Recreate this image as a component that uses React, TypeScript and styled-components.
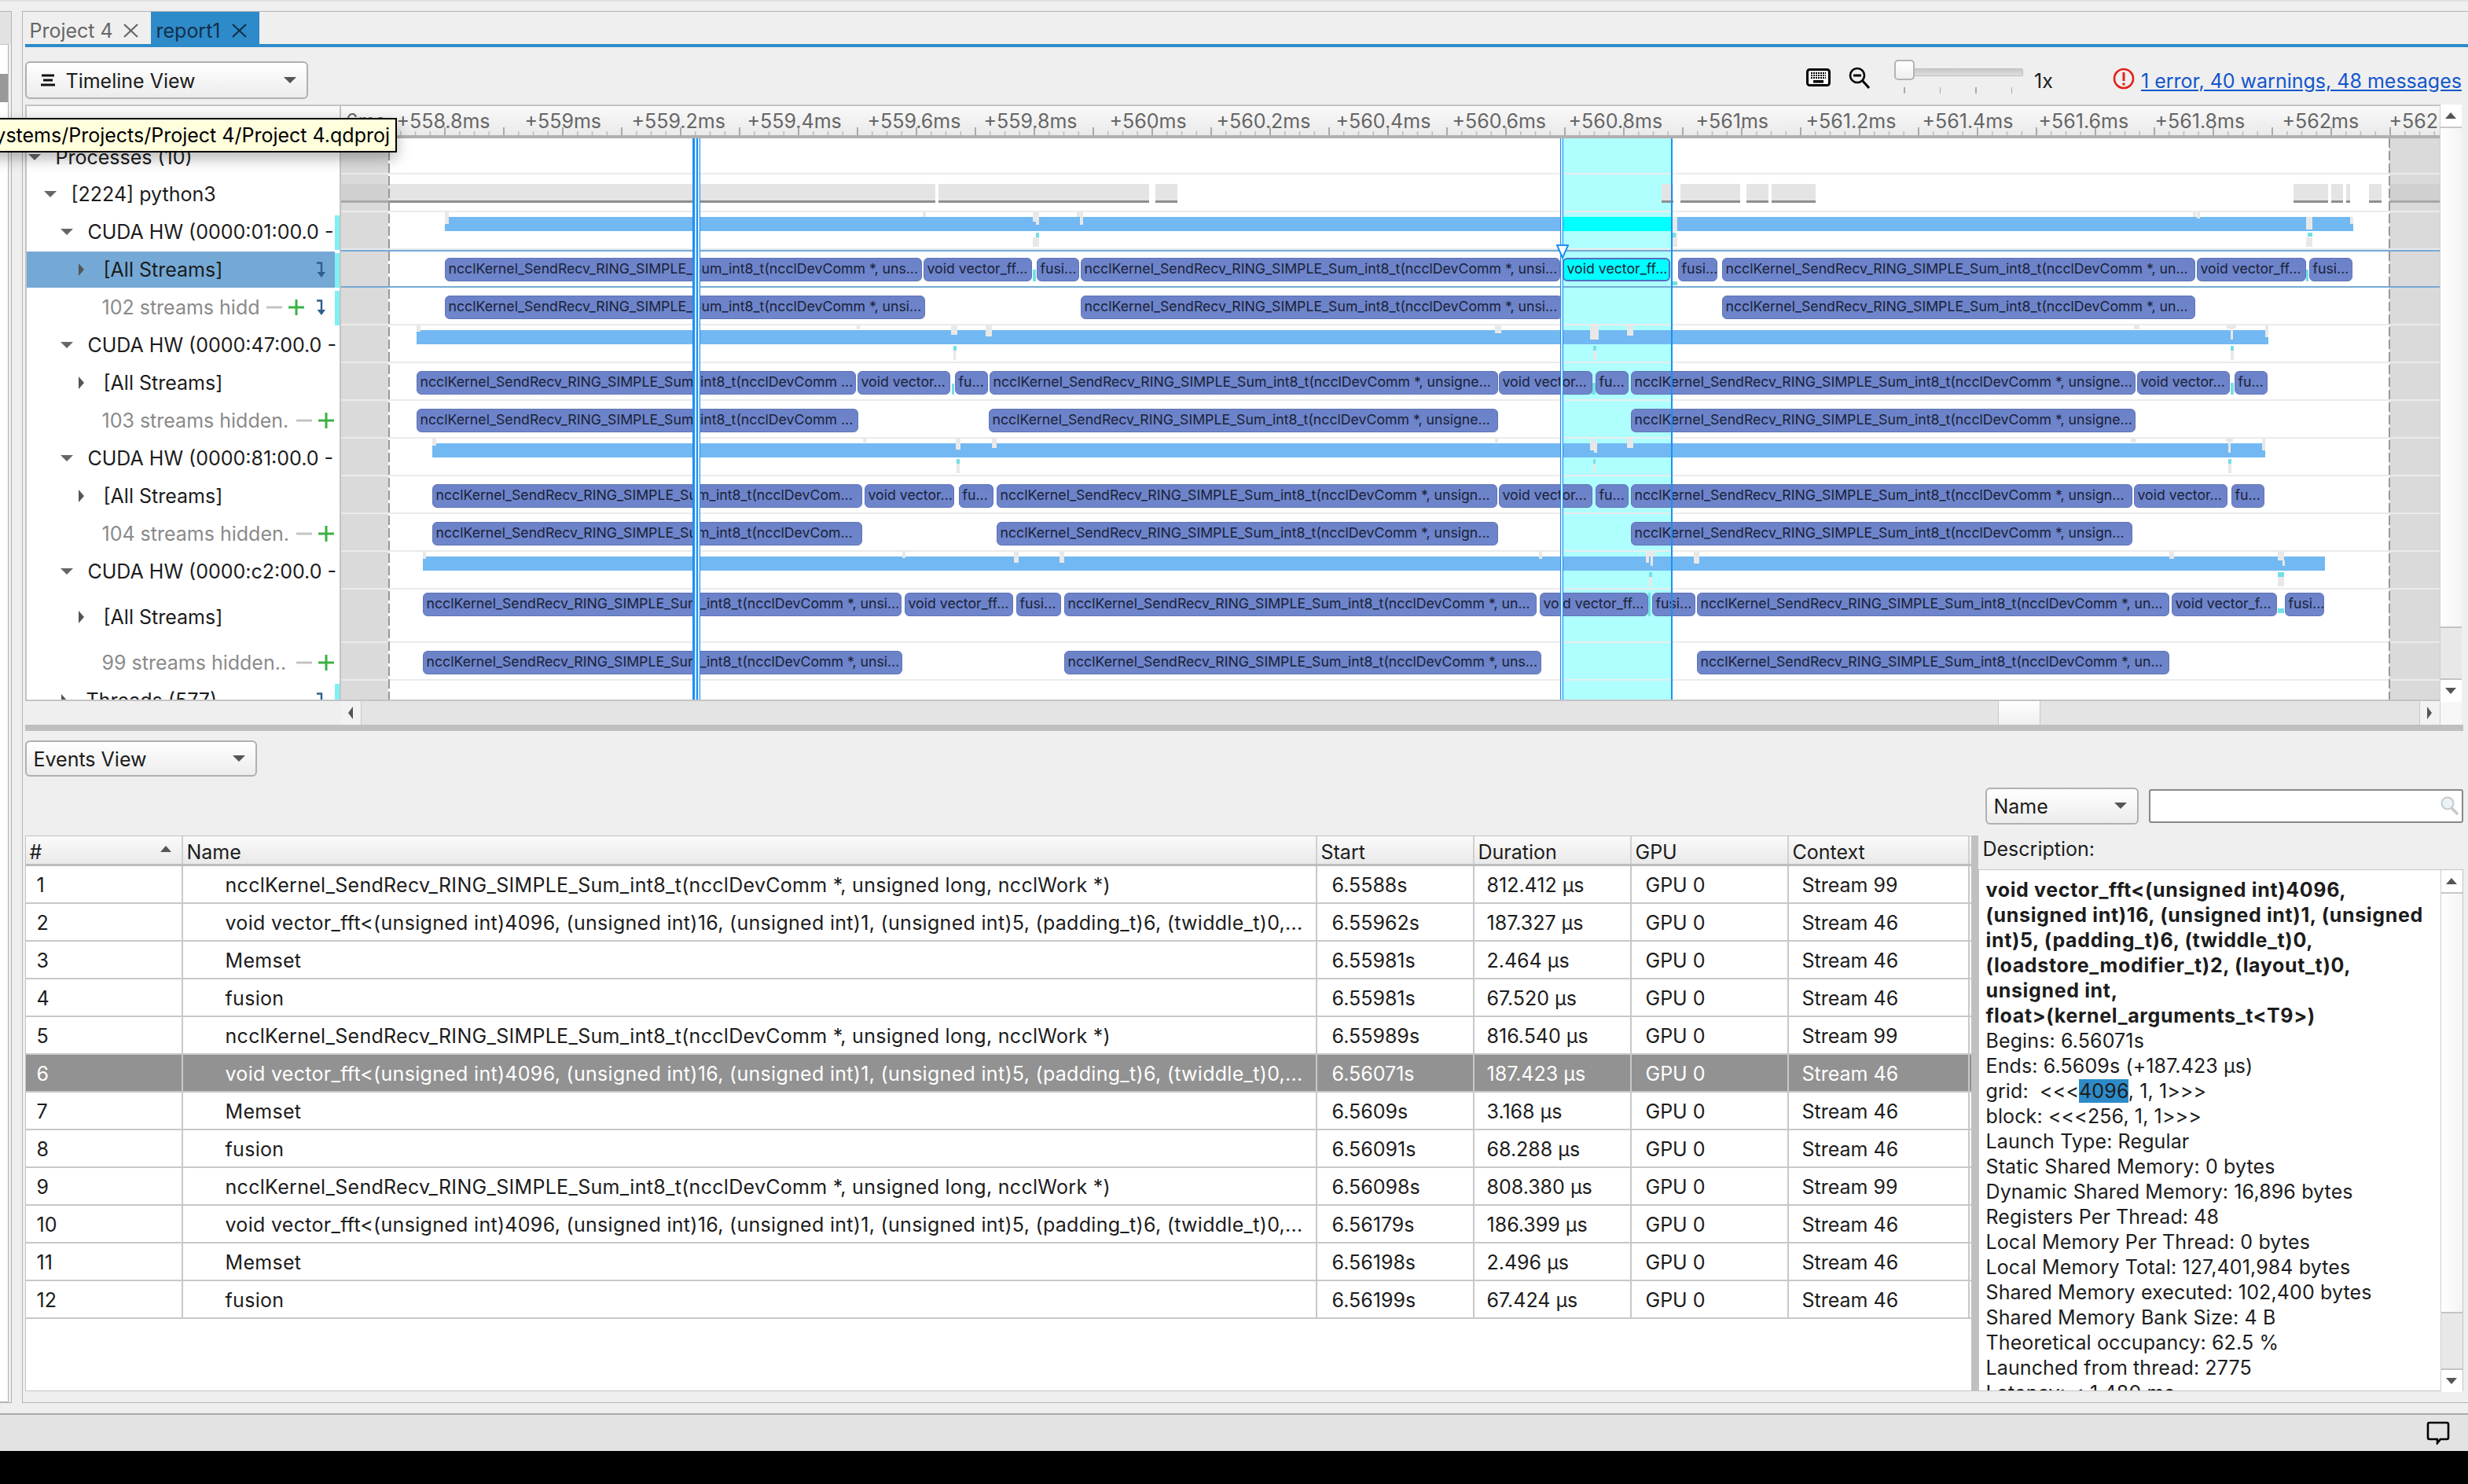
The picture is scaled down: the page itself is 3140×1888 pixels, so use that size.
import React from 'react';
import styled, { createGlobalStyle } from 'styled-components';

const GlobalStyle = createGlobalStyle`
  html, body {
    margin: 0;
    padding: 0;
    background: #efefef;
    font-family: Inter, "Liberation Sans", Arial, sans-serif;
    color: #1c1c1c;
    overflow: hidden;
  }
  * { box-sizing: border-box; }
`;

const TRACK_X = 434;
const FONT_SIZE = '25px';

const Page = styled.div`
  position: relative;
  width: 3140px;
  height: 1888px;
  overflow: hidden;
  background: #efefef;
  font-size: ${FONT_SIZE};
  display: flex;
  flex-direction: column;
`;

const TopStrip = styled.div`
  height: 14px;
  flex: none;
  border-top: 2px solid #e2e2e2;
`;

const Panes = styled.div`
  height: 1771px;
  flex: none;
  display: flex;
`;

const LeftPane = styled.div`
  width: 15px;
  flex: none;
  border-top: 1.5px solid #b4b4b4;
  border-right: 1.5px solid #b4b4b4;
  border-bottom: 1.5px solid #b4b4b4;
  display: flex;
  flex-direction: column;
`;

const LeftTabs = styled.div`
  height: 41px;
  flex: none;
  background: #e2e2e2;
`;

const LeftContent = styled.div`
  flex: 1;
  width: 11px;
  background: #fff;
  border-right: 1.5px solid #b4b4b4;
  border-top: 1px solid #c8c8c8;
  border-bottom: 1.5px solid #b4b4b4;
  padding-top: 37px;
`;

const LeftThumb = styled.div`
  height: 36px;
  background: #999;
`;

const RightPane = styled.div`
  margin-left: 13px;
  flex: 1;
  border-top: 1.5px solid #b4b4b4;
  border-left: 1.5px solid #b4b4b4;
  border-bottom: 1.5px solid #b4b4b4;
  padding-left: 2.5px;
  display: flex;
  flex-direction: column;
`;

const TabBar = styled.div`
  height: 41px;
  flex: none;
  display: flex;
  align-items: stretch;
`;

const Tab = styled.div<{ $active?: boolean; $width: number }>`
  width: ${p => p.$width}px;
  display: flex;
  align-items: center;
  padding: 6px 0 0 ${p => (p.$active ? 7 : 6)}px;
  background: ${p => (p.$active ? '#2e8bc9' : 'transparent')};
  color: ${p => (p.$active ? '#12304a' : '#666')};
  white-space: nowrap;
`;

const TabClose = styled.svg`
  margin-left: auto;
  margin-right: 16px;
  flex: none;
`;

const BlueLine = styled.div`
  height: 4px;
  flex: none;
  background: #2e8bc9;
`;

const Toolbar = styled.div`
  height: 72.5px;
  flex: none;
  display: flex;
  align-items: flex-start;
  justify-content: space-between;
  padding: 18px 8px 0 0;
`;

const Dropdown = styled.div<{ $width: number; $height: number }>`
  width: ${p => p.$width}px;
  height: ${p => p.$height}px;
  flex: none;
  border: 2px solid #b0b0b0;
  border-radius: 6px;
  background: linear-gradient(#ffffff, #ececec);
  display: flex;
  align-items: center;
  padding: 0 13px 0 9px;
  gap: 13px;
`;

const DropLabel = styled.span`
  flex: 1;
  padding-top: 2px;
  white-space: nowrap;
`;

const Caret = styled.span`
  width: 0;
  height: 0;
  flex: none;
  border-left: 8px solid transparent;
  border-right: 8px solid transparent;
  border-top: 8px solid #555;
`;

const Burger = styled.svg`
  flex: none;
  margin-left: 8px;
`;

const ZoomTools = styled.div`
  display: flex;
  align-items: flex-start;
  margin-top: -2px;
`;

const ToolIcon = styled.svg<{ $left: number; $top: number }>`
  flex: none;
  margin-left: ${p => p.$left}px;
  margin-top: ${p => p.$top}px;
`;

const Slider = styled.div`
  width: 164px;
  margin-left: 30px;
  flex: none;
  display: flex;
  flex-direction: column;
`;

const SliderRail = styled.div`
  position: relative;
  height: 26px;
  display: flex;
  align-items: center;
  padding-top: 6px;
`;

const SliderGroove = styled.div`
  flex: 1;
  height: 10px;
  background: linear-gradient(#c8c8c8, #dfdfdf);
  border: 1px solid #bdbdbd;
  border-radius: 2px;
`;

const SliderHandle = styled.div`
  position: absolute;
  left: 0;
  top: 0;
  width: 26px;
  height: 26px;
  background: linear-gradient(#ffffff, #efefef);
  border: 2px solid #b4b4b4;
  border-radius: 5px;
`;

const SliderTicks = styled.div`
  display: flex;
  justify-content: space-between;
  padding: 0 14px 0 12px;
  margin-top: 9px;
`;

const SliderTick = styled.i`
  width: 1.5px;
  height: 8px;
  background: #aaa;
`;

const ZoomLabel = styled.span`
  width: 26px;
  flex: none;
  margin-left: 14px;
  margin-top: 12px;
  line-height: 30px;
`;

const ErrorLink = styled.a`
  width: 408px;
  flex: none;
  margin-left: 8px;
  margin-top: 11px;
  line-height: 32px;
  color: #1256cc;
  text-decoration: underline;
  white-space: nowrap;
`;

const TimelinePane = styled.div`
  height: 789px;
  flex: none;
  display: flex;
`;

const TimelineMain = styled.div`
  width: 3072px;
  flex: none;
  display: flex;
  flex-direction: column;
`;

const Ruler = styled.div`
  height: 43px;
  flex: none;
  display: flex;
  border-top: 2px solid #c4c4c4;
  border-left: 2px solid #c4c4c4;
  background: linear-gradient(#f9f9f9, #eaeaea);
  border-bottom: 4px solid #b0b0b0;
`;

const RulerCorner = styled.div`
  width: 400px;
  flex: none;
  border-right: 2px solid #c4c4c4;
`;

const RulerScale = styled.div`
  position: relative;
  flex: 1;
  overflow: hidden;
  color: #666;
`;

const RulerLabel = styled.span`
  position: absolute;
  top: 2px;
  line-height: 34px;
  white-space: nowrap;
`;

const RulerTicks = styled.svg`
  position: absolute;
  left: 0;
  bottom: 0;
`;

const TimelineBody = styled.div`
  position: relative;
  height: 716px;
  flex: none;
  overflow: hidden;
  background: #fff;
  border-bottom: 2px solid #c4c4c4;
`;

const Gutter = styled.div<{ $left: number; $width: number }>`
  position: absolute;
  top: 0;
  bottom: 0;
  left: ${p => p.$left}px;
  width: ${p => p.$width}px;
  background: #dadada;
  z-index: 0;
`;

const DashLine = styled.div<{ $left: number }>`
  position: absolute;
  top: 0;
  bottom: 0;
  left: ${p => p.$left}px;
  width: 2px;
  z-index: 3;
  background: repeating-linear-gradient(#999 0 12px, transparent 12px 16px);
`;

const Highlight = styled.div`
  position: absolute;
  top: 0;
  bottom: 0;
  left: ${1989 - 32}px;
  width: ${2126 - 1989}px;
  background: #afffff;
  z-index: 0;
`;

const CursorLine = styled.div<{ $left: number; $width: number }>`
  position: absolute;
  top: 0;
  bottom: 0;
  left: ${p => p.$left - 32}px;
  width: ${p => p.$width}px;
  z-index: 4;
  background: #1e8ff0;
`;

const CursorGap = styled.div<{ $left: number }>`
  position: absolute;
  top: 0;
  bottom: 0;
  left: ${p => p.$left - 32}px;
  width: 2px;
  background: #d8ecff;
  z-index: 5;
`;

const CursorMark = styled.svg`
  position: absolute;
  left: ${1980 - 32}px;
  top: ${311 - 176}px;
  z-index: 6;
`;

const Row = styled.div<{ $height: number }>`
  position: relative;
  height: ${p => p.$height}px;
  flex: none;
  display: flex;
  z-index: 1;
`;

const TreeCell = styled.div<{ $indent: number; $hidden?: boolean }>`
  position: relative;
  width: 402px;
  flex: none;
  display: flex;
  align-items: center;
  overflow: hidden;
  white-space: nowrap;
  background: #fff;
  border-left: 2px solid #c4c4c4;
  border-right: 2px solid #c4c4c4;
  padding-left: ${p => p.$indent}px;
  padding-top: 3px;
  color: ${p => (p.$hidden ? '#8a8a8a' : '#1c1c1c')};
`;

const SelectedFill = styled.div`
  position: absolute;
  left: 0;
  right: 6px;
  top: 2px;
  bottom: -2px;
  background: #74a9d6;
`;

const TreeLabel = styled.span`
  position: relative;
  flex: 1;
  overflow: hidden;
`;

const ArrowDown = styled.i`
  position: relative;
  flex: none;
  width: 0;
  height: 0;
  margin-right: 19px;
  border-left: 8px solid transparent;
  border-right: 8px solid transparent;
  border-top: 8px solid #666;
`;

const ArrowRight = styled.i`
  position: relative;
  flex: none;
  width: 0;
  height: 0;
  margin-right: 25px;
  border-top: 8px solid transparent;
  border-bottom: 8px solid transparent;
  border-left: 7px solid #555;
`;

const RowActions = styled.div<{ $hook?: boolean }>`
  position: relative;
  flex: none;
  display: flex;
  align-items: center;
  gap: 13px;
  margin-left: 7px;
  margin-right: ${p => (p.$hook ? 17 : 6)}px;
`;

const CyanEdge = styled.div`
  position: absolute;
  right: 0;
  top: 4px;
  bottom: 0;
  width: 6px;
  background: #7ff0f4;
`;

const Track = styled.div<{ $selected?: boolean }>`
  position: relative;
  flex: 1;
  border-bottom: 2px solid ${p => (p.$selected ? '#74a9d6' : '#ebebeb')};
  ${p => (p.$selected ? 'box-shadow: inset 0 2px 0 #74a9d6;' : '')}
`;

const Band = styled.div<{ $dark?: boolean }>`
  position: absolute;
  top: 12px;
  height: 24px;
  background: ${p => (p.$dark ? '#d0d0d0' : '#e4e4e4')};
  border-bottom: 3px solid ${p => (p.$dark ? '#a8a8a8' : '#8f8f8f')};
`;

const LoadBar = styled.div<{ $cyan?: boolean }>`
  position: absolute;
  top: 6px;
  height: 18px;
  background: ${p => (p.$cyan ? '#00ffff' : '#72b8f2')};
`;

const Mark = styled.div<{ $color: string }>`
  position: absolute;
  background: ${p => p.$color};
`;

const Chip = styled.div<{ $top: number; $active?: boolean }>`
  position: absolute;
  top: ${p => p.$top}px;
  height: 30px;
  display: flex;
  align-items: center;
  padding: 0 0 2px 4px;
  overflow: hidden;
  white-space: nowrap;
  font-size: 17.7px;
  color: #1a2238;
  border-radius: 6px;
  border: ${p => (p.$active ? '2px solid #5270c0' : '1px solid #5f74b6')};
  background: ${p => (p.$active ? '#00ffff' : 'linear-gradient(#6b81c8, #6f86cd)')};
`;

const HScroll = styled.div`
  height: 30px;
  flex: none;
  display: flex;
  padding-left: 402px;
`;

const ScrollButton = styled.div<{ $dir: 'left' | 'right' }>`
  width: 26px;
  flex: none;
  background: #f2f2f2;
  display: flex;
  align-items: center;
  justify-content: center;
  border-${p => (p.$dir === 'left' ? 'right' : 'left')}: 1.5px solid #c8c8c8;
`;

const HTrack = styled.div`
  flex: 1;
  background: #e4e4e4;
  display: flex;
  padding-left: 2082px;
`;

const HThumb = styled.div`
  width: 54px;
  background: linear-gradient(#ffffff, #f0f0f0);
  border-left: 1px solid #c8c8c8;
  border-right: 1px solid #c8c8c8;
`;

const VScroll = styled.div<{ $thumb: number; $track: number }>`
  width: 28px;
  flex: none;
  display: flex;
  flex-direction: column;
  background: #f7f7f7;
  border-left: 1px solid #cfcfcf;
  --thumb: ${p => p.$thumb}px;
  --track: ${p => p.$track}px;
`;

const VButton = styled.div`
  height: 28px;
  flex: none;
  background: #fff;
  display: flex;
  align-items: center;
  justify-content: center;
`;

const VThumb = styled.div`
  height: var(--thumb);
  flex: none;
  background: linear-gradient(90deg, #ffffff, #f4f4f4);
  border-top: 2px solid #c8c8c8;
`;

const VTrack = styled.div`
  height: var(--track);
  flex: none;
  background: #e8e8e8;
  border-top: 2px solid #c4c4c4;
  border-bottom: 2px solid #c4c4c4;
`;

const ArrowUpSmall = styled.i`
  width: 0;
  height: 0;
  border-left: 7px solid transparent;
  border-right: 7px solid transparent;
  border-bottom: 8px solid #555;
`;

const ArrowDownSmall = styled.i`
  width: 0;
  height: 0;
  border-left: 7px solid transparent;
  border-right: 7px solid transparent;
  border-top: 8px solid #555;
`;

const ArrowLeftSmall = styled.i`
  width: 0;
  height: 0;
  border-top: 8px solid transparent;
  border-bottom: 8px solid transparent;
  border-right: 6px solid #555;
`;

const ArrowRightSmall = styled.i`
  width: 0;
  height: 0;
  border-top: 8px solid transparent;
  border-bottom: 8px solid transparent;
  border-left: 6px solid #555;
`;

const Splitter = styled.div`
  height: 8px;
  width: 3102px;
  flex: none;
  background: #bfbfbf;
`;

const EventsPane = styled.div`
  flex: 1;
  padding-top: 12px;
  display: flex;
  flex-direction: column;
  width: 3102px;
`;

const FilterRow = styled.div`
  height: 47px;
  margin-top: 14px;
  flex: none;
  display: flex;
  justify-content: flex-end;
  gap: 13px;
`;

const SearchBox = styled.div`
  width: 400px;
  height: 43px;
  margin-top: 2px;
  flex: none;
  background: #fff;
  border: 2px solid #888;
  border-radius: 3px;
  display: flex;
  align-items: center;
  justify-content: flex-end;
  padding-right: 3px;
`;

const Content = styled.div`
  height: 707px;
  margin-top: 14px;
  flex: none;
  display: flex;
`;

const TablePanel = styled.div`
  width: 2476px;
  flex: none;
  background: #fff;
  border: 1.5px solid #c4c4c4;
  border-right: none;
  display: flex;
  flex-direction: column;
`;

const GridColumns = `
  display: grid;
  grid-template-columns: 200px 1443px 200px 200px 200px 230px;
`;

const HeaderRow = styled.div`
  ${GridColumns}
  height: 38.5px;
  flex: none;
  background: linear-gradient(#fbfbfb, #e9e9e9);
  border-bottom: 3px solid #bcbcbc;
`;

const HeaderCell = styled.div`
  display: flex;
  align-items: center;
  justify-content: space-between;
  padding: 6px 13px 0 5px;
  border-right: 2px solid #d0d0d0;
  overflow: hidden;
`;

const SortArrow = styled.i`
  width: 0;
  height: 0;
  margin-bottom: 8px;
  border-left: 7px solid transparent;
  border-right: 7px solid transparent;
  border-bottom: 8px solid #555;
`;

const TableRow = styled.div<{ $selected?: boolean }>`
  ${GridColumns}
  height: 48px;
  flex: none;
  border-bottom: 2px solid #c8c8c8;
  background: ${p => (p.$selected ? '#929292' : '#fff')};
  color: ${p => (p.$selected ? '#fff' : '#1c1c1c')};
`;

const TableCell = styled.div<{ $pad: number; $spaced?: boolean }>`
  display: flex;
  align-items: center;
  padding-left: ${p => p.$pad}px;
  padding-top: 1px;
  letter-spacing: ${p => (p.$spaced ? '0.3px' : 'normal')};
  border-right: 2px solid #c8c8c8;
  white-space: nowrap;
  overflow: hidden;
`;

const VSplitter = styled.div`
  width: 9px;
  flex: none;
  background: #c0c0c0;
`;

const DescColumn = styled.div`
  width: 617px;
  flex: none;
  display: flex;
  flex-direction: column;
`;

const DescLabel = styled.div`
  height: 43px;
  flex: none;
  padding: 0 0 8px 6px;
  display: flex;
  align-items: center;
`;

const DescBox = styled.div`
  flex: 1;
  min-height: 0;
  background: #fff;
  border: 1.5px solid #c4c4c4;
  display: flex;
`;

const DescText = styled.div`
  flex: 1;
  padding: 9px 0 0 9px;
  overflow: hidden;
  line-height: 32px;
  letter-spacing: 0.12px;
  white-space: nowrap;
`;

const DescTitle = styled.div`
  font-weight: 700;
  letter-spacing: 0.65px;
`;

const Selection = styled.span`
  background: #2e8bc9;
`;

const GapStrip = styled.div`
  height: 13px;
  flex: none;
`;

const StatusBar = styled.div`
  height: 48px;
  flex: none;
  background: #e3e3e3;
  border-top: 2px solid #a9a9a9;
  display: flex;
  justify-content: flex-end;
  align-items: center;
  padding-right: 23px;
`;

const BottomBlack = styled.div`
  flex: 1;
  background: #000;
`;

const Tooltip = styled.div`
  position: absolute;
  left: -200px;
  top: 150px;
  width: 705px;
  height: 44px;
  background: #ffffdd;
  border: 2.5px solid #000;
  display: flex;
  align-items: center;
  justify-content: flex-end;
  padding-right: 7px;
  color: #000;
  white-space: nowrap;
  box-shadow: 0 8px 18px rgba(0, 0, 0, 0.28);
  z-index: 10;
`;

const nccl = 'ncclKernel_SendRecv_RING_SIMPLE_Sum_int8_t(ncclDevComm ';

type ChipDef = [number, number, string];

const chips1: ChipDef[] = [
  [566, 1173, `${nccl}*, uns...`],
  [1175, 1313, 'void vector_ff...'],
  [1319, 1373, 'fusi...'],
  [1375, 1985, `${nccl}*, unsi...`],
  [1988, 2125, 'void vector_ff...'],
  [2135, 2185, 'fusi...'],
  [2191, 2793, `${nccl}*, un...`],
  [2795, 2934, 'void vector_ff...'],
  [2938, 2993, 'fusi...'],
];
const chips2: ChipDef[] = [
  [566, 1177, `${nccl}*, unsi...`],
  [1375, 1988, `${nccl}*, unsi...`],
  [2191, 2793, `${nccl}*, un...`],
];
const chips3: ChipDef[] = [
  [530, 1089, `${nccl}...`],
  [1091, 1209, 'void vector...'],
  [1215, 1257, 'fu...'],
  [1259, 1906, `${nccl}*, unsigne...`],
  [1907, 2026, 'void vector...'],
  [2030, 2072, 'fu...'],
  [2075, 2717, `${nccl}*, unsigne...`],
  [2719, 2837, 'void vector...'],
  [2843, 2885, 'fu...'],
];
const chips4: ChipDef[] = [
  [530, 1092, `${nccl}...`],
  [1258, 1906, `${nccl}*, unsigne...`],
  [2075, 2717, `${nccl}*, unsigne...`],
];
const chips5: ChipDef[] = [
  [550, 1097, 'ncclKernel_SendRecv_RING_SIMPLE_Sum_int8_t(ncclDevCom...'],
  [1100, 1214, 'void vector...'],
  [1220, 1264, 'fu...'],
  [1268, 1905, `${nccl}*, unsign...`],
  [1907, 2026, 'void vector...'],
  [2030, 2072, 'fu...'],
  [2075, 2713, `${nccl}*, unsign...`],
  [2715, 2834, 'void vector...'],
  [2839, 2881, 'fu...'],
];
const chips6: ChipDef[] = [
  [550, 1097, 'ncclKernel_SendRecv_RING_SIMPLE_Sum_int8_t(ncclDevCom...'],
  [1268, 1906, `${nccl}*, unsign...`],
  [2075, 2713, `${nccl}*, unsign...`],
];
const chips7: ChipDef[] = [
  [538, 1147, `${nccl}*, unsi...`],
  [1151, 1289, 'void vector_ff...'],
  [1293, 1350, 'fusi...'],
  [1354, 1955, `${nccl}*, un...`],
  [1959, 2097, 'void vector_ff...'],
  [2102, 2157, 'fusi...'],
  [2159, 2760, `${nccl}*, un...`],
  [2763, 2897, 'void vector_f...'],
  [2907, 2957, 'fusi...'],
];
const chips8: ChipDef[] = [
  [538, 1148, `${nccl}*, unsi...`],
  [1354, 1961, `${nccl}*, uns...`],
  [2159, 2760, `${nccl}*, un...`],
];

// x, width, top in row, height
type Notch = [number, number, number, number];

const GREY = '#e8e8e8';
const TEAL = '#74dfe6';

interface TrackDef {
  chips?: ChipDef[];
  chipTop?: number;
  band?: boolean;
  bar?: [number, number];
  cyan?: [number, number];
  notches?: Notch[];
  teal?: Notch[];
}

interface RowDef {
  height: number;
  label: string;
  indent: number;
  arrow?: 'down' | 'right';
  hidden?: boolean;
  selected?: boolean;
  minusPlus?: boolean;
  hook?: boolean;
  edge?: boolean;
  track: TrackDef;
}

const rows: RowDef[] = [
  { height: 46, label: 'Processes (10)', indent: 2, arrow: 'down', track: {} },
  { height: 48, label: '[2224] python3', indent: 22, arrow: 'down', track: { band: true } },
  {
    height: 48,
    label: 'CUDA HW (0000:01:00.0 - ',
    indent: 43,
    arrow: 'down',
    edge: true,
    track: {
      bar: [566, 2994],
      cyan: [1989, 2127],
      notches: [
        [566, 5, 0, 15], [1174, 4, 0, 6], [1314, 4, 0, 12], [1318, 4, 0, 16], [1370, 4, 0, 6], [1374, 4, 0, 16],
        [2128, 6, 6, 18], [2790, 4, 0, 6], [2795, 4, 0, 8], [2934, 8, 6, 16], [2990, 4, 6, 9], [2128, 6, 26, 18],
        [1314, 8, 32, 12], [2934, 8, 32, 12],
      ],
      teal: [[1318, 4, 26, 6], [2936, 6, 26, 5], [2128, 4, 26, 6]],
    },
  },
  {
    height: 48,
    label: '[All Streams]',
    indent: 66,
    arrow: 'right',
    selected: true,
    hook: true,
    edge: true,
    track: { chips: chips1, chipTop: 10, teal: [[1314, 4, 25, 15], [2934, 3, 25, 15], [2126, 8, 40, 5]] },
  },
  { height: 48, label: '102 streams hidd', indent: 96, hidden: true, minusPlus: true, hook: true, edge: true, track: { chips: chips2, chipTop: 10 } },
  {
    height: 48,
    label: 'CUDA HW (0000:47:00.0 - ',
    indent: 43,
    arrow: 'down',
    track: {
      bar: [530, 2886],
      notches: [
        [530, 5, 0, 8], [1090, 4, 0, 5], [1210, 8, 0, 12], [1254, 8, 0, 14], [1902, 8, 0, 10], [2023, 11, 0, 18],
        [2070, 8, 0, 13], [2715, 7, 0, 5], [2833, 12, 0, 4], [2838, 3, 4, 14], [2882, 4, 0, 15],
        [1213, 3, 32, 12], [2027, 4, 32, 12], [2838, 4, 32, 12],
      ],
      teal: [[1213, 4, 26, 6], [2027, 4, 26, 6], [2838, 4, 26, 6]],
    },
  },
  { height: 48, label: '[All Streams]', indent: 66, arrow: 'right', track: { chips: chips3, chipTop: 10, teal: [[2024, 6, 25, 15], [2838, 4, 25, 15], [1211, 3, 26, 14]] } },
  { height: 48, label: '103 streams hidden.', indent: 96, hidden: true, minusPlus: true, track: { chips: chips4, chipTop: 10 } },
  {
    height: 48,
    label: 'CUDA HW (0000:81:00.0 - ',
    indent: 43,
    arrow: 'down',
    track: {
      bar: [550, 2882],
      notches: [
        [550, 5, 0, 9], [1098, 4, 0, 5], [1216, 6, 0, 14], [1262, 6, 0, 12], [1902, 4, 0, 5], [2023, 5, 0, 15],
        [2028, 4, 4, 14], [2070, 8, 0, 12], [2711, 7, 0, 5], [2832, 9, 0, 4], [2835, 3, 4, 14], [2878, 4, 0, 15],
        [1217, 4, 32, 12], [2027, 3, 32, 12], [2835, 4, 32, 12],
      ],
      teal: [[1217, 4, 26, 6], [2027, 3, 26, 6], [2835, 4, 26, 6]],
    },
  },
  { height: 48, label: '[All Streams]', indent: 66, arrow: 'right', track: { chips: chips5, chipTop: 10 } },
  { height: 48, label: '104 streams hidden.', indent: 96, hidden: true, minusPlus: true, track: { chips: chips6, chipTop: 10 } },
  {
    height: 48,
    label: 'CUDA HW (0000:c2:00.0 - ',
    indent: 43,
    arrow: 'down',
    track: {
      bar: [538, 2958],
      notches: [
        [538, 4, 0, 9], [1148, 4, 0, 8], [1290, 6, 0, 14], [1348, 6, 0, 14], [1958, 4, 0, 9], [2094, 4, 0, 14],
        [2098, 8, 0, 6], [2100, 3, 6, 12], [2155, 7, 0, 15], [2760, 6, 0, 9], [2898, 8, 0, 11], [2904, 3, 11, 7],
        [2098, 4, 32, 12], [2898, 8, 32, 12],
      ],
      teal: [[2098, 4, 26, 6], [2898, 8, 26, 6]],
    },
  },
  { height: 68, label: '[All Streams]', indent: 66, arrow: 'right', track: { chips: chips7, chipTop: 4, teal: [[2898, 8, 24, 6], [2097, 3, 4, 30]] } },
  { height: 48, label: '99 streams hidden..', indent: 96, hidden: true, minusPlus: true, track: { chips: chips8, chipTop: 10 } },
  { height: 48, label: 'Threads (577)', indent: 44, arrow: 'right', hook: true, edge: true, track: {} },
];

const bandSegments: [number, number][] = [
  [494, 1190], [1194, 1462], [1470, 1498], [2114, 2129], [2138, 2214], [2222, 2250], [2254, 2310],
  [2918, 2962], [2966, 2981], [2985, 2990], [3014, 3030],
];

const bandGutters: [number, number][] = [
  [434, 494], [3040, 3104],
];

const rulerLabels: [number, string][] = [
  [372, '+558.6ms'],
  [505, '+558.8ms'], [668, '+559ms'], [804, '+559.2ms'], [951, '+559.4ms'], [1104, '+559.6ms'], [1252, '+559.8ms'],
  [1412, '+560ms'], [1548, '+560.2ms'], [1700, '+560.4ms'], [1848, '+560.6ms'], [1996, '+560.8ms'], [2158, '+561ms'],
  [2298, '+561.2ms'], [2446, '+561.4ms'], [2594, '+561.6ms'], [2742, '+561.8ms'], [2904, '+562ms'], [3040, '+562.2ms'],
];

const events = [
  ['1', `${nccl}*, unsigned long, ncclWork *)`, '6.5588s', '812.412 µs', 'GPU 0', 'Stream 99'],
  ['2', 'void vector_fft<(unsigned int)4096, (unsigned int)16, (unsigned int)1, (unsigned int)5, (padding_t)6, (twiddle_t)0,...', '6.55962s', '187.327 µs', 'GPU 0', 'Stream 46'],
  ['3', 'Memset', '6.55981s', '2.464 µs', 'GPU 0', 'Stream 46'],
  ['4', 'fusion', '6.55981s', '67.520 µs', 'GPU 0', 'Stream 46'],
  ['5', `${nccl}*, unsigned long, ncclWork *)`, '6.55989s', '816.540 µs', 'GPU 0', 'Stream 99'],
  ['6', 'void vector_fft<(unsigned int)4096, (unsigned int)16, (unsigned int)1, (unsigned int)5, (padding_t)6, (twiddle_t)0,...', '6.56071s', '187.423 µs', 'GPU 0', 'Stream 46'],
  ['7', 'Memset', '6.5609s', '3.168 µs', 'GPU 0', 'Stream 46'],
  ['8', 'fusion', '6.56091s', '68.288 µs', 'GPU 0', 'Stream 46'],
  ['9', `${nccl}*, unsigned long, ncclWork *)`, '6.56098s', '808.380 µs', 'GPU 0', 'Stream 99'],
  ['10', 'void vector_fft<(unsigned int)4096, (unsigned int)16, (unsigned int)1, (unsigned int)5, (padding_t)6, (twiddle_t)0,...', '6.56179s', '186.399 µs', 'GPU 0', 'Stream 46'],
  ['11', 'Memset', '6.56198s', '2.496 µs', 'GPU 0', 'Stream 46'],
  ['12', 'fusion', '6.56199s', '67.424 µs', 'GPU 0', 'Stream 46'],
];

const columnPads = [14, 54, 19, 16, 18, 17];

const titleLines = [
  'void vector_fft<(unsigned int)4096,',
  '(unsigned int)16, (unsigned int)1, (unsigned',
  'int)5, (padding_t)6, (twiddle_t)0,',
  '(loadstore_modifier_t)2, (layout_t)0,',
  'unsigned int,',
  'float>(kernel_arguments_t<T9>)',
];

const detailLines = [
  'Begins: 6.56071s',
  'Ends: 6.5609s (+187.423 µs)',
];

const moreLines = [
  'block: <<<256, 1, 1>>>',
  'Launch Type: Regular',
  'Static Shared Memory: 0 bytes',
  'Dynamic Shared Memory: 16,896 bytes',
  'Registers Per Thread: 48',
  'Local Memory Per Thread: 0 bytes',
  'Local Memory Total: 127,401,984 bytes',
  'Shared Memory executed: 102,400 bytes',
  'Shared Memory Bank Size: 4 B',
  'Theoretical occupancy: 62.5 %',
  'Launched from thread: 2775',
  'Latency: < 1.480 ms',
];

const CloseIcon = ({ color }: { color: string }) => (
  <TabClose width="19" height="18" viewBox="0 0 19 18">
    <path d="M1 1 L18 17 M18 1 L1 17" stroke={color} strokeWidth="2.2" fill="none" />
  </TabClose>
);

const HookIcon = () => (
  <svg width="14" height="21" viewBox="0 0 14 21" style={{ flex: 'none' }}>
    <path d="M2 1.5 H8 V15" stroke="#2c5f8e" strokeWidth="2.4" fill="none" />
    <path d="M2.5 13 L8 20 L13 13 Z" fill="#2c5f8e" />
  </svg>
);

const MinusPlus = () => (
  <svg width="49" height="22" viewBox="0 0 49 22" style={{ flex: 'none' }}>
    <path d="M0 11 H20" stroke="#c4c4c4" strokeWidth="3" />
    <path d="M28 11 H48 M38 1 V21" stroke="#3bb143" strokeWidth="3" />
  </svg>
);

const RulerTickMarks = () => {
  const ticks: React.ReactNode[] = [];
  for (let i = 0; i < 150; i++) {
    const x = 132 - 75 * 2 + i * 18.75;
    const major = i % 4 === 0;
    ticks.push(
      <line key={i} x1={x} x2={x} y1={major ? 0 : 5} y2={10} stroke={major ? '#9a9a9a' : '#bdbdbd'} strokeWidth="1.6" />
    );
  }
  return (
    <RulerTicks width="2670" height="10" viewBox="0 0 2670 10">
      {ticks}
    </RulerTicks>
  );
};

const TrackContent = ({ def }: { def: TrackDef }) => (
  <>
    {def.band &&
      bandSegments.map(([a, b]) => <Band key={a} style={{ left: a - TRACK_X, width: b - a }} />)}
    {def.band &&
      bandGutters.map(([a, b]) => <Band key={a} $dark style={{ left: a - TRACK_X, width: b - a }} />)}
    {def.bar && <LoadBar style={{ left: def.bar[0] - TRACK_X, width: def.bar[1] - def.bar[0] }} />}
    {def.cyan && <LoadBar $cyan style={{ left: def.cyan[0] - TRACK_X, width: def.cyan[1] - def.cyan[0] }} />}
    {def.notches?.map(([x, w, t, h], i) => (
      <Mark key={i} $color={GREY} style={{ left: x - TRACK_X, width: w, top: t, height: h }} />
    ))}
    {def.teal?.map(([x, w, t, h], i) => (
      <Mark key={i} $color={TEAL} style={{ left: x - TRACK_X, width: w, top: t, height: h }} />
    ))}
    {def.chips?.map(([a, b, text]) => (
      <Chip key={a} $top={def.chipTop ?? 10} $active={a === 1988} style={{ left: a - TRACK_X, width: b - a }}>
        {text}
      </Chip>
    ))}
  </>
);

const App: React.FC = () => {
  return (
    <Page>
      <GlobalStyle />
      <TopStrip />
      <Panes>
        <LeftPane>
          <LeftTabs />
          <LeftContent>
            <LeftThumb />
          </LeftContent>
        </LeftPane>
        <RightPane>
          <TabBar>
            <Tab $width={160}>
              Project 4
              <CloseIcon color="#666" />
            </Tab>
            <Tab $active $width={138}>
              report1
              <CloseIcon color="#12304a" />
            </Tab>
          </TabBar>
          <BlueLine />
          <Toolbar>
            <Dropdown $width={360} $height={48}>
              <Burger width="20" height="16" viewBox="0 0 20 16">
                <path d="M2 2 H18 M4 8 H16 M1 14 H19" stroke="#111" strokeWidth="3" />
              </Burger>
              <DropLabel>Timeline View</DropLabel>
              <Caret />
            </Dropdown>
            <ZoomTools>
              <ToolIcon $left={0} $top={11} width="31" height="23" viewBox="0 0 31 23">
                <rect x="1.5" y="1.5" width="28" height="20" rx="3" fill="#fff" stroke="#000" strokeWidth="3" />
                <path d="M6 6 H25 M6 9 H25 M6 12 H25" stroke="#000" strokeWidth="2" strokeDasharray="2 1" />
                <rect x="9" y="15" width="13" height="3.5" fill="#000" />
              </ToolIcon>
              <ToolIcon $left={23} $top={9} width="28" height="28" viewBox="0 0 28 28">
                <circle cx="11" cy="11" r="9" fill="none" stroke="#000" strokeWidth="2.6" />
                <path d="M6 11 H16" stroke="#000" strokeWidth="3" />
                <path d="M17 17 L26 27" stroke="#000" strokeWidth="3" />
              </ToolIcon>
              <Slider>
                <SliderRail>
                  <SliderGroove />
                  <SliderHandle />
                </SliderRail>
                <SliderTicks>
                  <SliderTick />
                  <SliderTick />
                  <SliderTick />
                  <SliderTick />
                </SliderTicks>
              </Slider>
              <ZoomLabel>1x</ZoomLabel>
              <ToolIcon $left={74} $top={10} width="28" height="28" viewBox="0 0 28 28">
                <circle cx="14" cy="14" r="12" fill="none" stroke="#e2231a" strokeWidth="2.6" />
                <path d="M14 6 V17" stroke="#e2231a" strokeWidth="3" />
                <circle cx="14" cy="21" r="1.8" fill="#e2231a" />
              </ToolIcon>
              <ErrorLink>1 error, 40 warnings, 48 messages</ErrorLink>
            </ZoomTools>
          </Toolbar>
          <TimelinePane>
            <TimelineMain>
              <Ruler>
                <RulerCorner />
                <RulerScale>
                  {rulerLabels.map(([x, text]) => (
                    <RulerLabel key={text} style={{ left: x - TRACK_X }}>
                      {text}
                    </RulerLabel>
                  ))}
                  <RulerTickMarks />
                </RulerScale>
              </Ruler>
              <TimelineBody>
                <Gutter $left={402} $width={60} />
                <Gutter $left={3008} $width={64} />
                <Highlight />
                <DashLine $left={462} />
                <DashLine $left={3007} />
                {rows.map(row => (
                  <Row key={row.label + row.height + row.indent + row.track.chips?.[0]?.[0]} $height={row.height}>
                    <TreeCell $indent={row.indent} $hidden={row.hidden}>
                      {row.selected && <SelectedFill />}
                      {row.edge && <CyanEdge />}
                      {row.arrow === 'down' && <ArrowDown />}
                      {row.arrow === 'right' && <ArrowRight />}
                      <TreeLabel>{row.label}</TreeLabel>
                      {(row.minusPlus || row.hook) && (
                        <RowActions $hook={row.hook}>
                          {row.minusPlus && <MinusPlus />}
                          {row.hook && <HookIcon />}
                        </RowActions>
                      )}
                    </TreeCell>
                    <Track $selected={row.selected}>
                      <TrackContent def={row.track} />
                    </Track>
                  </Row>
                ))}
                <CursorLine $left={881} $width={10} />
                <CursorGap $left={884} />
                <CursorGap $left={888} />
                <CursorLine $left={1985} $width={4} />
                <CursorGap $left={1986} />
                <CursorLine $left={2126} $width={2} />
                <CursorMark width="16" height="18" viewBox="0 0 16 18">
                  <path d="M1 1 H15 L8 17 Z" fill="#fff" stroke="#1e8ff0" strokeWidth="2" />
                </CursorMark>
              </TimelineBody>
              <HScroll>
                <ScrollButton $dir="left">
                  <ArrowLeftSmall />
                </ScrollButton>
                <HTrack>
                  <HThumb />
                </HTrack>
                <ScrollButton $dir="right">
                  <ArrowRightSmall />
                </ScrollButton>
              </HScroll>
            </TimelineMain>
            <VScroll $thumb={636} $track={68}>
              <VButton>
                <ArrowUpSmall />
              </VButton>
              <VThumb />
              <VTrack />
              <VButton>
                <ArrowDownSmall />
              </VButton>
            </VScroll>
          </TimelinePane>
          <Splitter />
          <EventsPane>
            <Dropdown $width={295} $height={46}>
              <DropLabel>Events View</DropLabel>
              <Caret />
            </Dropdown>
            <FilterRow>
              <Dropdown $width={195} $height={47}>
                <DropLabel>Name</DropLabel>
                <Caret />
              </Dropdown>
              <SearchBox>
                <svg width="26" height="26" viewBox="0 0 26 26">
                  <circle cx="11" cy="10" r="7.5" fill="#eaf3f8" stroke="#c2ccd2" strokeWidth="2" />
                  <path d="M16 16 L24 24" stroke="#c8c8c8" strokeWidth="3.5" />
                </svg>
              </SearchBox>
            </FilterRow>
            <Content>
              <TablePanel>
                <HeaderRow>
                  <HeaderCell>
                    #
                    <SortArrow />
                  </HeaderCell>
                  <HeaderCell>Name</HeaderCell>
                  <HeaderCell>Start</HeaderCell>
                  <HeaderCell>Duration</HeaderCell>
                  <HeaderCell>GPU</HeaderCell>
                  <HeaderCell>Context</HeaderCell>
                </HeaderRow>
                {events.map(cells => (
                  <TableRow key={cells[0]} $selected={cells[0] === '6'}>
                    {cells.map((cell, i) => (
                      <TableCell key={i} $pad={columnPads[i]} $spaced={i === 1}>
                        {cell}
                      </TableCell>
                    ))}
                  </TableRow>
                ))}
              </TablePanel>
              <VSplitter />
              <DescColumn>
                <DescLabel>Description:</DescLabel>
                <DescBox>
                  <DescText>
                    {titleLines.map(line => (
                      <DescTitle key={line}>{line}</DescTitle>
                    ))}
                    {detailLines.map(line => (
                      <div key={line}>{line}</div>
                    ))}
                    <div>
                      grid:&nbsp; &lt;&lt;&lt;<Selection>4096</Selection>, 1, 1&gt;&gt;&gt;
                    </div>
                    {moreLines.map(line => (
                      <div key={line}>{line}</div>
                    ))}
                  </DescText>
                  <VScroll $thumb={534} $track={74}>
                    <VButton>
                      <ArrowUpSmall />
                    </VButton>
                    <VThumb />
                    <VTrack />
                    <VButton>
                      <ArrowDownSmall />
                    </VButton>
                  </VScroll>
                </DescBox>
              </DescColumn>
            </Content>
          </EventsPane>
        </RightPane>
      </Panes>
      <GapStrip />
      <StatusBar>
        <svg width="30" height="30" viewBox="0 0 30 30">
          <path d="M4 2 H26 Q28 2 28 4 V21 Q28 23 26 23 H18 L14 28 V23 H4 Q2 23 2 21 V4 Q2 2 4 2 Z" fill="none" stroke="#000" strokeWidth="2.6" />
        </svg>
      </StatusBar>
      <BottomBlack />
      <Tooltip>Systems/Projects/Project 4/Project 4.qdproj</Tooltip>
    </Page>
  );
};

export default App;
